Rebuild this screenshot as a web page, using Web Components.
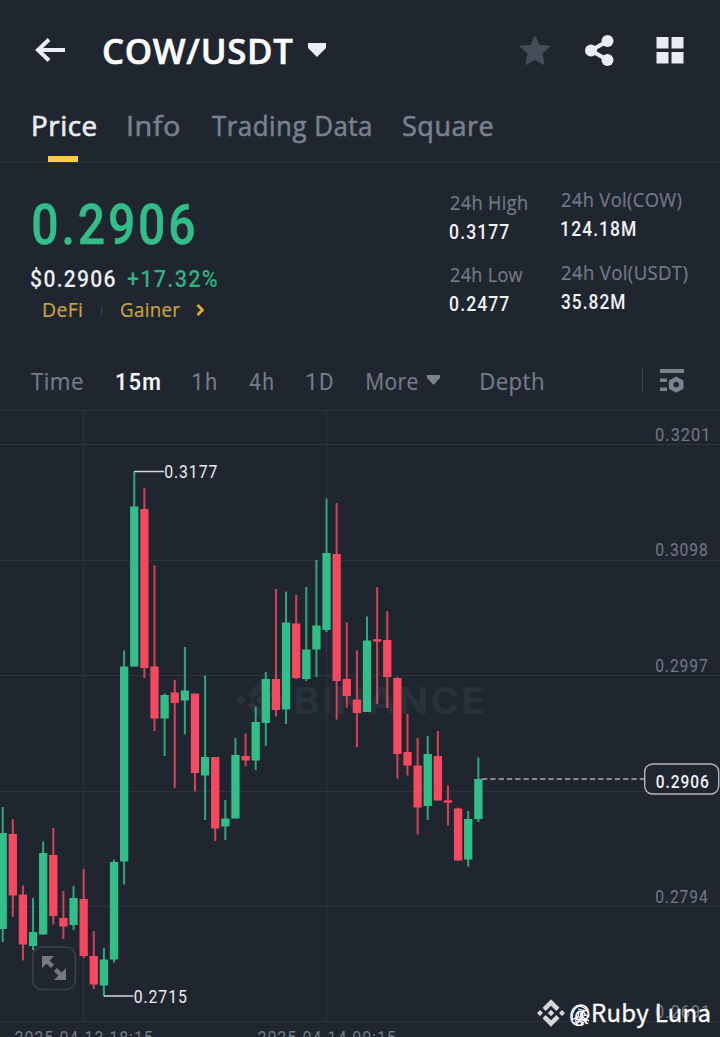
<!DOCTYPE html>
<html lang="en">
<head>
<meta charset="utf-8">
<title>COW/USDT</title>
<style>
  html, body { margin: 0; background: #1f2630; }
  body { width: 720px; height: 1037px; overflow: hidden; }
</style>
</head>
<body>
<trade-page></trade-page>

<script>
const TEXT = '"Open Sans", "Noto Sans", sans-serif';
const NUM = 'Roboto, "Liberation Sans", sans-serif';
const ctx = document.createElement("canvas").getContext("2d");

// scale and shift that make the ink of a text span exactly `width` px
function fitInk(text, font, width, spacing = 0) {
  ctx.font = font;
  ctx.letterSpacing = `${spacing}px`;
  const m = ctx.measureText(text);
  const scale = width / (m.actualBoundingBoxLeft + m.actualBoundingBoxRight);
  return { scale, shift: m.actualBoundingBoxLeft * scale };
}

// <fit-text w="60" size="20" weight="400" line="24" stroke="0.4" num>
class FitText extends HTMLElement {
  constructor() {
    super();
    this.attachShadow({ mode: "open" });
  }

  connectedCallback() {
    const width = Number(this.getAttribute("w"));
    const size = Number(this.getAttribute("size"));
    const weight = this.getAttribute("weight") || "400";
    const line = this.getAttribute("line") || "28";
    const stroke = this.getAttribute("stroke") || "0";
    const num = this.hasAttribute("num");
    const family = num ? NUM : TEXT;
    const spacing = size * (num ? 0.06 : 0.02);
    const { scale, shift } = fitInk(this.textContent, `${weight} ${size}px ${family}`, width, spacing);
    this.shadowRoot.innerHTML = `
    <style>
      :host { display: block; flex: none; width: ${width}px; height: ${line}px; white-space: nowrap; }
      span {
        display: inline-block;
        font: ${weight} ${size}px/${line}px ${family.replace(/"/g, "'")};
        letter-spacing: ${spacing}px;
        -webkit-text-stroke: ${stroke}px currentColor;
        transform: translateX(${shift}px) scaleX(${scale});
        transform-origin: 0 50%;
      }
    </style>
    <span><slot></slot></span>
    `;
  }
}

class PairHeader extends HTMLElement {
  constructor() {
    super();
    this.attachShadow({ mode: "open" });
    this.shadowRoot.innerHTML = `
    <style>
      :host { display: flex; align-items: center; height: 100px; padding: 0 36px 0 35px; color: #fdfdfe; }
      svg { display: block; flex: none; fill: #eaecf2; }
      fit-text { margin: 2px 15px 0 38px; }
      .actions { display: flex; align-items: center; margin-left: auto; }
      .share { margin: 0 42px 0 34px; }
    </style>
    <svg width="31" height="26" viewBox="0 0 31 26">
      <path d="M14 2.500 3 13l11 10.500M3 13h27" fill="none" stroke="#eaecf2" stroke-width="4"/>
    </svg>
    <fit-text w="189" size="35" weight="600" line="48" stroke="0.6">COW/USDT</fit-text>
    <svg width="18" height="14" viewBox="0 0 18 14"><path d="M0 0h18v5L9 14 0 5z"/></svg>
    <div class="actions">
      <svg width="31" height="31" viewBox="0 0 31 31">
        <path d="M15 1.500l4 9 10.500 1-8 6.800 2.300 10.700-8.800-5-8.800 5 2.300-10.700-8-6.800 10.500-1z" fill="#474d58" stroke="#474d58" stroke-width="1.500" stroke-linejoin="round"/>
      </svg>
      <svg class="share" width="29" height="31" viewBox="0 0 29 31">
        <path d="M22.500 6 6 15.500l16.500 9.500" fill="none" stroke="#eaecf2" stroke-width="4"/>
        <circle cx="6" cy="15.500" r="6"/><circle cx="22.500" cy="6" r="6"/><circle cx="22.500" cy="25" r="6"/>
      </svg>
      <svg width="28" height="27" viewBox="0 0 28 27">
        <path d="M.5 0h12v11.500H.5zM15.500 0h12v11.500h-12zM.5 15h12v11.500H.5zM15.500 15h12v11.500h-12z"/>
      </svg>
    </div>
    `;
  }
}

class NavTabs extends HTMLElement {
  constructor() {
    super();
    this.attachShadow({ mode: "open" });
    this.shadowRoot.innerHTML = `
    <style>
      :host {
        display: flex; box-sizing: border-box; height: 63px;
        padding-left: 32.5px; gap: 32px; color: #7a808d; border-bottom: 1px solid #2d343f;
      }
      .on { color: #eaecef; }
      .on::after { content: ""; display: block; width: 30px; height: 6px; margin: 6px 0 0 15.5px; background: #f5d03c; }
    </style>
    <div class="on"><fit-text w="63.5" size="28" weight="500" line="50" stroke="0.7">Price</fit-text></div>
    <fit-text w="51.5" size="28" weight="500" line="50" stroke="0.6">Info</fit-text>
    <fit-text w="159" size="28" weight="500" line="50" stroke="0.6">Trading Data</fit-text>
    <fit-text w="90" size="28" weight="500" line="50" stroke="0.6">Square</fit-text>
    `;
  }
}

class StatItem extends HTMLElement {
  constructor() {
    super();
    this.attachShadow({ mode: "open" });
    this.shadowRoot.innerHTML = `
    <style>
      :host { display: flex; flex-direction: column; gap: 1px; color: #f1f2f4; }
      .label { color: #757b88; }
    </style>
    <div class="label"><slot name="label"></slot></div>
    <slot></slot>
    `;
  }
}

class PriceSummary extends HTMLElement {
  constructor() {
    super();
    this.attachShadow({ mode: "open" });
    this.shadowRoot.innerHTML = `
    <style>
      :host { display: flex; box-sizing: border-box; height: 189px; padding-left: 31px; }
      .left { width: 419px; padding-top: 32px; }
      .price { color: #32be88; margin-left: 2px; }
      .row { display: flex; margin-top: 10px; gap: 12px; color: #eceef1; }
      .up { color: #32b27f; }
      .tags { display: flex; align-items: center; margin: 5px 0 0 12px; color: #cba43d; }
      .tags i { width: 1px; height: 9px; margin: 0 19px 0 19px; background: #3d444f; }
      .tags svg { margin-left: 16px; }
      .stats { display: flex; flex-direction: column; gap: 15px; padding-top: 26px; }
      .stats + .stats { margin-left: 34px; padding-top: 23px; gap: 16px; }
    </style>
    <div class="left">
      <fit-text class="price" w="161" size="56" weight="500" line="60" stroke="0.5" num>0.2906</fit-text>
      <div class="row">
        <fit-text w="84" size="24" weight="500" num>$0.2906</fit-text>
        <fit-text class="up" w="90" size="24" weight="500" num>+17.32%</fit-text>
      </div>
      <div class="tags">
        <fit-text w="39" size="19.5" line="24" stroke="0.2">DeFi</fit-text>
        <i></i>
        <fit-text w="59" size="19.5" line="24" stroke="0.2">Gainer</fit-text>
        <svg width="8" height="12" viewBox="0 0 8 12"><path d="M1.500 1l5 5-5 5" fill="none" stroke="#dcae34" stroke-width="2.800"/></svg>
      </div>
    </div>
    <div class="stats">
      <stat-item><fit-text slot="label" w="77" size="20" stroke="0.2">24h High</fit-text><fit-text w="59" size="20" weight="500" num>0.3177</fit-text></stat-item>
      <stat-item><fit-text slot="label" w="73" size="20" stroke="0.2">24h Low</fit-text><fit-text w="59" size="20" weight="500" num>0.2477</fit-text></stat-item>
    </div>
    <div class="stats">
      <stat-item><fit-text slot="label" w="121" size="20" stroke="0.2">24h Vol(COW)</fit-text><fit-text w="75" size="20" weight="500" num>124.18M</fit-text></stat-item>
      <stat-item><fit-text slot="label" w="127" size="20" stroke="0.2">24h Vol(USDT)</fit-text><fit-text w="64" size="20" weight="500" num>35.82M</fit-text></stat-item>
    </div>
    `;
  }
}

class IntervalBar extends HTMLElement {
  constructor() {
    super();
    this.attachShadow({ mode: "open" });
    this.shadowRoot.innerHTML = `
    <style>
      :host { display: flex; align-items: center; height: 58px; padding: 0 36px 0 31px; color: #767c89; }
      .on { color: #f3f4f6; margin: 0 33px 0 33px; }
      .caret { margin: 0 41px 3px 9px; }
      i { width: 1px; height: 24px; margin: 0 17px 0 auto; background: #3c434e; }
      svg { flex: none; fill: #7c828e; }
      fit-text[num] { padding-top: 1.5px; }
    </style>
    <fit-text w="52" size="24" stroke="0.2">Time</fit-text>
    <fit-text class="on" w="44" size="24" weight="600" num>15m</fit-text>
    <fit-text w="23" size="24" num>1h</fit-text>
    <fit-text w="24" size="24" num style="margin: 0 34px 0 33px">4h</fit-text>
    <fit-text w="26" size="24" num>1D</fit-text>
    <fit-text w="51" size="24" stroke="0.2" style="margin-left: 34px">More</fit-text>
    <svg class="caret" width="13" height="10" viewBox="0 0 13 10"><path d="M0 0h13v3L6.500 10 0 3z"/></svg>
    <fit-text w="62" size="24" stroke="0.2">Depth</fit-text>
    <i></i>
    <svg width="24" height="24" viewBox="0 0 24 24">
      <path d="M0 0h24v4H0zM0 9.500h7V13H0zM0 18.500h7V22H0z"/>
      <path fill-rule="evenodd" d="M16.200 7.500l7.300 4v8.200l-7.300 4-7.300-4v-8.200zm0 5.200a2.900 2.900 0 1 0 .01 0z"/>
    </svg>
    `;
  }
}

// [direction, high, body top, body bottom, low] in page pixels
const CANDLES = [
  ["g", 807, 833, 929, 942], ["r", 819, 834, 895.5, 917], ["r", 885.5, 894.5, 944.5, 960.5],
  ["g", 898, 932, 946, 950], ["g", 841.5, 853, 934.5, 934.5], ["r", 828, 855, 916, 924.5],
  ["r", 891, 918, 926.5, 939], ["g", 886, 898, 925, 930], ["r", 869, 899, 956, 958],
  ["r", 931, 956, 984.5, 989], ["g", 948, 959.5, 985.5, 996], ["g", 859.5, 862, 959.5, 962.5],
  ["g", 650.5, 666.5, 861.5, 884.5], ["g", 471, 506.5, 666.5, 666.5], ["r", 488, 509, 668, 678],
  ["r", 565.5, 666.5, 718.5, 731], ["g", 693.5, 695, 718.5, 756], ["r", 680, 692.5, 703, 788],
  ["g", 647, 690.5, 700.5, 734.5], ["r", 693.5, 693.5, 773, 791.5], ["g", 675.5, 757, 775.5, 820],
  ["r", 757, 757, 828.5, 841], ["g", 800, 818.5, 826.5, 840], ["g", 738, 755, 818.5, 818.5],
  ["r", 733.5, 756, 760.5, 766.5], ["g", 706.5, 722, 760.5, 770], ["g", 672, 679, 723, 746],
  ["r", 589, 679, 710, 716.5], ["g", 591.5, 622.5, 709.5, 724], ["r", 595, 623.5, 678, 679],
  ["g", 587, 649.5, 679, 681], ["g", 560, 625.5, 649.5, 677], ["g", 498.5, 553, 630, 632],
  ["r", 503, 554, 681, 719.5], ["r", 622.5, 679, 696, 707.5], ["r", 650.5, 699.5, 713, 747],
  ["g", 616.5, 640.5, 712, 712], ["r", 587, 639.2, 641.5, 704], ["r", 611, 640, 677, 708],
  ["r", 677, 678, 754, 778.5], ["r", 714, 752, 765.5, 775.5], ["r", 738, 765.5, 807.5, 834.5],
  ["g", 736, 754, 806, 820], ["r", 731, 756, 800.5, 800.5], ["r", 785.5, 800.3, 802.7, 825.5],
  ["r", 807.5, 808.5, 860.5, 860.5], ["g", 811, 819, 859.5, 866.5], ["g", 757.5, 779, 819, 822],
];

class CandleChart extends HTMLElement {
  constructor() {
    super();
    this.attachShadow({ mode: "open" });
    this.label = this.label.bind(this);
  }

  connectedCallback() {
    this.render();
  }

  label(text, x, y, width, size, fill, weight = 400, family = NUM) {
    const spacing = size * 0.06;
    const { scale, shift } = fitInk(text, `${weight} ${size}px ${family}`, width, spacing);
    return `<text transform="translate(${x + shift} ${y}) scale(${scale} 1)" font-family='${family}' font-size="${size}" font-weight="${weight}" letter-spacing="${spacing}" fill="${fill}">${text}</text>`;
  }

  candle([dir, high, top, bottom, low], i) {
    const x = 2.7 + i * 10.12;
    return `<g class="${dir}"><rect x="${x - 1}" y="${high}" width="2" height="${low - high}" opacity=".85"/><rect x="${x - 4.15}" y="${top}" width="8.300" height="${bottom - top}"/></g>`;
  }

  render() {
    const grey = "#737986";
    const label = this.label;
    const axis = [["0.3201", 441], ["0.3098", 556.3], ["0.2997", 672], ["0.2794", 903], ["0.2691", 1018]];
    this.shadowRoot.innerHTML = `
    <style>
      :host { display: block; height: 627px; }
      svg { display: block; }
      .g { fill: #32be88; }
      .r { fill: #f6485e; }
    </style>
    <svg width="720" height="627" viewBox="0 410 720 627">
      <path d="M0 410.500h720M0 444.500h720M0 560.500h720M0 675.500h720M0 791.500h720M0 906.500h720M0 1021.500h720M83.500 410v612M326.500 410v612" stroke="#2d343f" fill="none"/>
      <g fill="#2b313b" transform="translate(260.500 700) scale(1.780)">
        <path d="M-7.500-3.200 0-10.800 7.500-3.200 4.500-.200 0-4.700-4.500-.200zM-7.500 3.200 0 10.800 7.500 3.200 4.500.200 0 4.700-4.500.200zM-14 0l3-3 3 3-3 3zM8 0l3-3 3 3-3 3zM-2.800 0 0-2.800 2.800 0 0 2.800z"/>
      </g>
      ${label("BINANCE", 296, 713.5, 188, 36.5, "#2b313b", 700, "Inter, sans-serif")}
      ${CANDLES.map(this.candle).join("")}
      <path d="M134.500 471.500H164M103.800 996H133.500" stroke="#d5d7dc" stroke-width="1.500"/>
      ${label("0.3177", 165, 478, 52, 18.5, "#eaecef")}
      ${label("0.2715", 134.5, 1003, 52, 18.5, "#eaecef")}
      ${axis.map(([text, y]) => label(text, 656, y, 51.5, 18.5, grey)).join("")}
      ${label("2025-04-13 18:15", 14.5, 1044, 138, 18.5, grey)}
      ${label("2025-04-14 00:15", 257.5, 1044, 138, 18.5, grey)}
      <path d="M482 779H644" stroke="#a9adb4" stroke-width="1.500" stroke-dasharray="5.300 3"/>
      <rect x="644.700" y="764" width="74" height="30" rx="8" fill="#1f2630" stroke="#b4b8be" stroke-width="1.400"/>
      ${label("0.2906", 655.8, 788, 52.5, 18.5, "#f0f1f3", 500)}
      <rect x="32.800" y="947" width="42.500" height="42.500" rx="9" fill="#1f2630" stroke="#3a404a" stroke-width="1.700"/>
      <path d="M42 956h12L42 968zM66 980H54l12-12z" fill="#747984"/>
      <path d="M45.500 959.500l7 6.800M62.500 976.500l-7-6.800" stroke="#747984" stroke-width="4.500"/>
    </svg>
    `;
  }
}

class AuthorMark extends HTMLElement {
  constructor() {
    super();
    this.attachShadow({ mode: "open" });
    this.shadowRoot.innerHTML = `
    <style>
      :host { position: absolute; left: 537px; top: 998px; display: flex; align-items: center; gap: 4px; height: 30px; color: #fff; }
      svg { flex: none; }
      b { font: 400 24px/30px "Noto Sans CJK SC", "Noto Sans", sans-serif; white-space: nowrap; }
      .at { position: relative; width: 22px; height: 30px; }
      .at b { display: block; transform: translateY(-1px) scaleX(.94); transform-origin: 0 50%; }
      .at svg { position: absolute; left: 0; top: 4px; }
      .name { margin: -2px 0 0 -4px; letter-spacing: .25px; -webkit-text-stroke: .3px #fff; }
    </style>
    <svg width="28" height="28" viewBox="-14 -14 28 28" fill="#d5d7da">
      <path d="M-8.500-5.200 0-13.800 8.500-5.200 5.300-2 0-7.300-5.300-2zM-8.500 5.200 0 13.800 8.500 5.200 5.300 2 0 7.300-5.300 2zM-14 0l3-3 3 3-3 3zM8 0l3-3 3 3-3 3zM-3.200 0 0-3.200 3.200 0 0 3.200z"/>
    </svg>
    <div class="at"><b>@</b>
      <svg width="22" height="24" viewBox="0 0 22 24" fill="none" stroke="#fff" stroke-width="1.200">
        <path d="M3.500 17C2.500 8 8 3.500 12 4.500s8 5 8 10M6 19c3-3 4-6 4-10M8 21c4-4 4-8 4-12M12 10c1 5 4 8 8 9M14 8c1 4 3 6 6 7M7 22l4-3 2 3 3-3 3 3M10 18h10M9 15l9-2M13 17v5M17 16v6M3 18l5-3M5 21.500l5-3M9 7l8 2"/>
      </svg>
    </div>
    <b class="name">Ruby Luna</b>
    `;
  }
}

class TradePage extends HTMLElement {
  constructor() {
    super();
    this.attachShadow({ mode: "open" });
  }

  connectedCallback() {
    this.shadowRoot.innerHTML = `
    <style>
      :host { display: flex; flex-direction: column; position: relative; width: 720px; height: 1037px; overflow: hidden; background: #1f2630; }
    </style>
    <pair-header></pair-header>
    <nav-tabs></nav-tabs>
    <price-summary></price-summary>
    <interval-bar></interval-bar>
    <candle-chart></candle-chart>
    <author-mark></author-mark>
    `;
  }
}

customElements.define("fit-text", FitText);
customElements.define("pair-header", PairHeader);
customElements.define("nav-tabs", NavTabs);
customElements.define("stat-item", StatItem);
customElements.define("price-summary", PriceSummary);
customElements.define("interval-bar", IntervalBar);
customElements.define("candle-chart", CandleChart);
customElements.define("author-mark", AuthorMark);
customElements.define("trade-page", TradePage);
</script>
</body>
</html>
